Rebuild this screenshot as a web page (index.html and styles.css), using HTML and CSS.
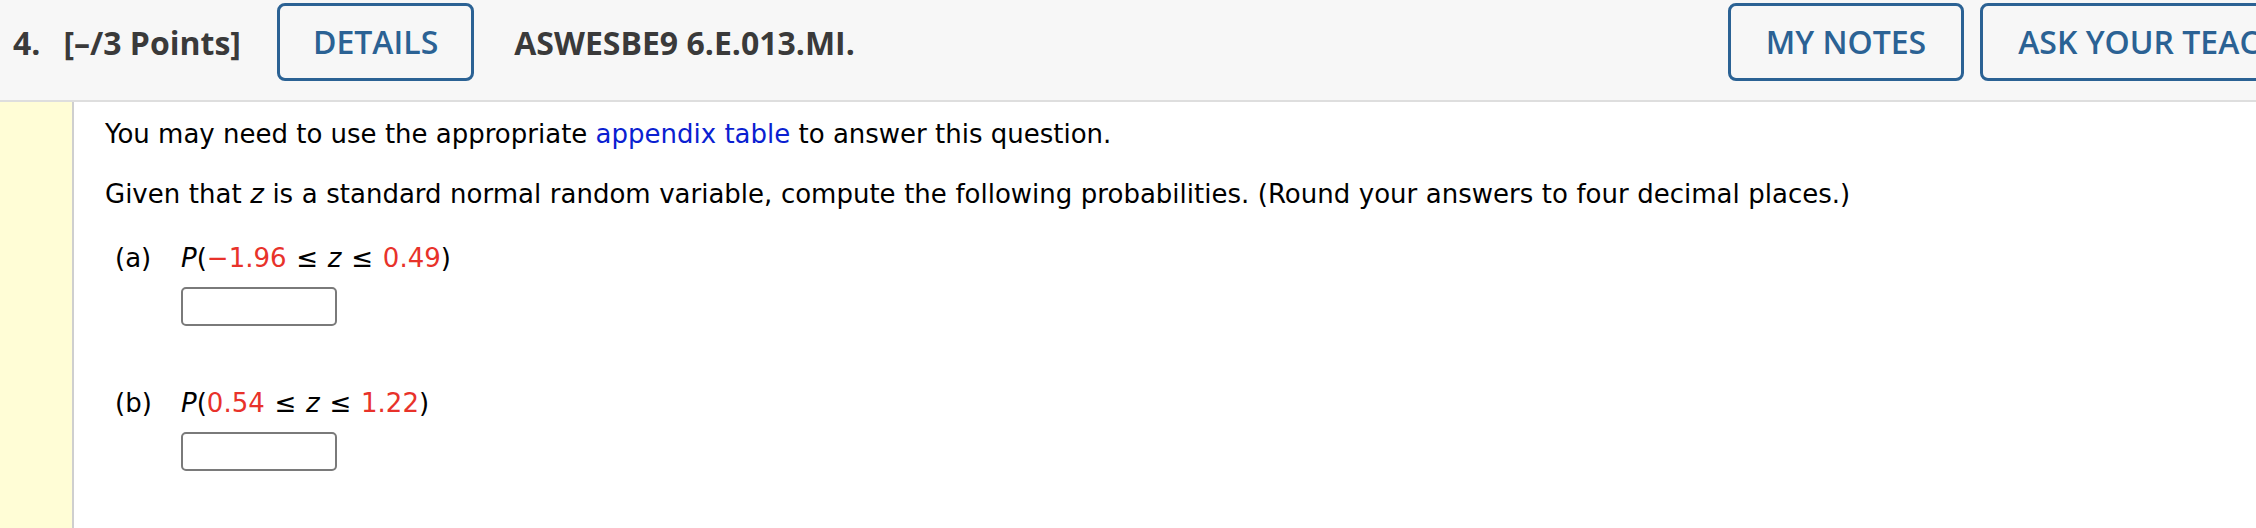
FILE: index.html
```html
<!DOCTYPE html>
<html lang="en">
<head>
<meta charset="utf-8">
<title>Question 4</title>
<link rel="stylesheet" href="styles.css">
</head>
<body>
<div class="page">
  <header class="qhead">
    <div class="qnum">4.</div>
    <div class="qpoints">[–/3 Points]</div>
    <button class="btn">DETAILS</button>
    <div class="qcode">ASWESBE9 6.E.013.MI.</div>
    <div class="spacer"></div>
    <button class="btn btn-wide">MY NOTES</button>
    <button class="btn btn-wide">ASK YOUR TEACHER</button>
  </header>
  <div class="qbody">
    <div class="gutter"></div>
    <div class="content">
      <p class="line first">You may need to use the appropriate <a href="#" class="link">appendix table</a> to answer this question.</p>
      <p class="line second">Given that <i>z</i> is a standard normal random variable, compute the following probabilities. (Round your answers to four decimal places.)</p>
      <div class="part part-a">
        <div class="plabel">(a)</div>
        <div class="pbody">
          <div class="math"><i>P</i>(<span class="red">−1.96</span> ≤ <i>z</i> ≤ <span class="red">0.49</span>)</div>
          <input class="answer" type="text">
        </div>
      </div>
      <div class="part part-b">
        <div class="plabel">(b)</div>
        <div class="pbody">
          <div class="math"><i>P</i>(<span class="red">0.54</span> ≤ <i>z</i> ≤ <span class="red">1.22</span>)</div>
          <input class="answer" type="text">
        </div>
      </div>
    </div>
  </div>
</div>
</body>
</html>
```

FILE: styles.css
```css
html, body {
  margin: 0;
  padding: 0;
  overflow: hidden;
  background: #ffffff;
}

.page {
  width: 2384px;
  height: 528px;
  display: flex;
  flex-direction: column;
}

.qhead {
  display: flex;
  align-items: center;
  background: #f7f7f7;
  border-bottom: 2px solid #dedede;
  padding: 3px 24px 19px 13px;
  font-family: "Open Sans", "Liberation Sans", sans-serif;
  font-size: 32px;
  font-weight: 700;
  color: #3a3a3a;
}

.qnum {
  margin-right: 23px;
}

.qpoints {
  margin-right: 36px;
}

.qcode {
  margin-left: 40px;
}

.spacer {
  flex: 1;
}

.btn {
  font-family: "Open Sans", "Liberation Sans", sans-serif;
  font-size: 32px;
  font-weight: 600;
  color: #2b6294;
  background: transparent;
  border: 3px solid #2b6294;
  border-radius: 8px;
  height: 78px;
  padding: 0 33px;
  margin: 0;
  line-height: 1;
  flex-shrink: 0;
}

.btn-wide {
  padding: 0 35px;
}

.btn + .btn {
  margin-left: 16px;
}

.qbody {
  flex: 1;
  display: flex;
}

.gutter {
  width: 72px;
  background: #fffdd6;
  border-right: 2px solid #cfcfcf;
  flex-shrink: 0;
}

.content {
  padding: 14px 0 0 31px;
  font-family: "DejaVu Sans", Verdana, sans-serif;
  font-size: 26px;
  line-height: 36px;
  color: #000;
}

.line {
  margin: 0;
  white-space: nowrap;
}

.line.second {
  margin-top: 24px;
  word-spacing: 0.3px;
}

.link {
  color: #0b1fd1;
  text-decoration: none;
}

.part {
  display: flex;
}

.part-a {
  margin-top: 28px;
}

.part-b {
  margin-top: 59px;
}

.plabel {
  padding-left: 10px;
  width: 66px;
  flex-shrink: 0;
}

.pbody {
  display: flex;
  flex-direction: column;
  align-items: flex-start;
}

.math {
  word-spacing: 1.5px;
}

.red {
  color: #e8322a;
}

.answer {
  margin-top: 11px;
  width: 156px;
  height: 39px;
  box-sizing: border-box;
  border: 2px solid #7a7a7a;
  border-radius: 5px;
  background: #fff;
  padding: 0;
}
```
